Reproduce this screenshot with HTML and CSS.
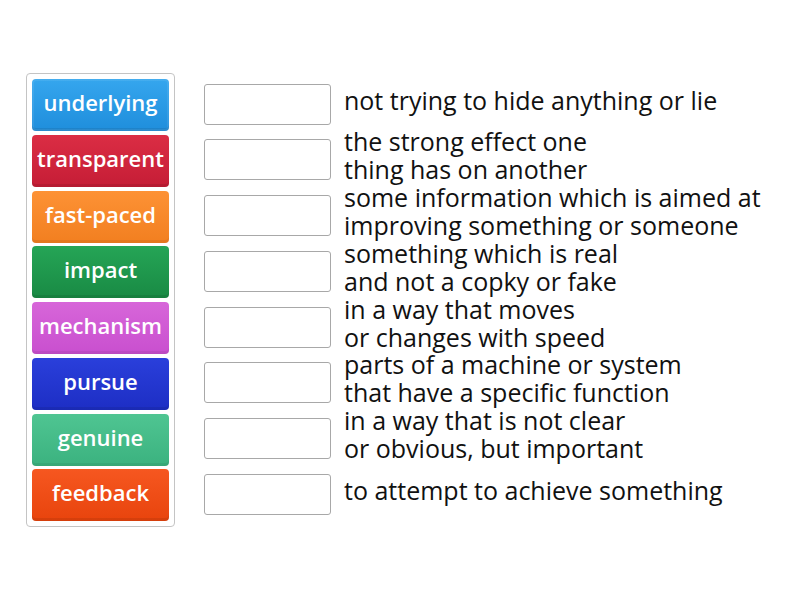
FILE: index.html
```html
<!DOCTYPE html>
<html>
<head>
<meta charset="utf-8">
<link rel="stylesheet" href="styles.css">
</head>
<body>
<div class="page">
  <div class="bank">
    <div class="tile c1">underlying</div>
    <div class="tile c2">transparent</div>
    <div class="tile c3">fast-paced</div>
    <div class="tile c4">impact</div>
    <div class="tile c5">mechanism</div>
    <div class="tile c6">pursue</div>
    <div class="tile c7">genuine</div>
    <div class="tile c8">feedback</div>
  </div>
  <div class="rows">
    <div class="row"><div class="slot"></div><div class="def">not trying to hide anything or lie</div></div>
    <div class="row"><div class="slot"></div><div class="def">the strong effect one<br>thing has on another</div></div>
    <div class="row"><div class="slot"></div><div class="def">some information which is aimed at<br>improving something or someone</div></div>
    <div class="row"><div class="slot"></div><div class="def">something which is real<br>and not a copky or fake</div></div>
    <div class="row"><div class="slot"></div><div class="def">in a way that moves<br>or changes with speed</div></div>
    <div class="row"><div class="slot"></div><div class="def">parts of a machine or system<br>that have a specific function</div></div>
    <div class="row"><div class="slot"></div><div class="def">in a way that is not clear<br>or obvious, but important</div></div>
    <div class="row"><div class="slot"></div><div class="def">to attempt to achieve something</div></div>
  </div>
</div>
</body>
</html>
```
FILE: styles.css
```css
html, body {
  margin: 0;
  padding: 0;
  background: #fff;
}
.page {
  display: flex;
  align-items: flex-start;
  padding: 73px 0 0 26px;
  font-family: "Open Sans", "Liberation Sans", sans-serif;
}
.bank {
  display: flex;
  flex-direction: column;
  gap: 3.75px;
  padding: 5px;
  border: 1px solid #c4c4c4;
  border-radius: 4px;
  width: 137px;
}
.tile {
  height: 52px;
  border-radius: 4px;
  color: #fff;
  font-size: 22px;
  font-weight: 600;
  display: flex;
  align-items: center;
  justify-content: center;
  box-sizing: border-box;
  padding-bottom: 6px;
  white-space: nowrap;
}
.c1 { background: linear-gradient(#35a6ee, #1f8edc); box-shadow: inset 0 -3px 0 rgba(0,0,0,0.08), inset 0 0 0 2px rgba(255,255,255,0.08); }
.c2 { background: linear-gradient(#db2d44, #c51d36); box-shadow: inset 0 -3px 0 rgba(0,0,0,0.08); }
.c3 { background: linear-gradient(#fd9235, #f27f20); box-shadow: inset 0 -3px 0 rgba(0,0,0,0.06); }
.c4 { background: linear-gradient(#25a556, #198a44); box-shadow: inset 0 -3px 0 rgba(0,0,0,0.08); }
.c5 { background: linear-gradient(#d766d9, #c94fcf); box-shadow: inset 0 -3px 0 rgba(0,0,0,0.06); }
.c6 { background: linear-gradient(#2a3fdb, #1d2ec4); box-shadow: inset 0 -3px 0 rgba(0,0,0,0.08); }
.c7 { background: linear-gradient(#4fc592, #3bb27f); box-shadow: inset 0 -3px 0 rgba(0,0,0,0.06); }
.c8 { background: linear-gradient(#f65720, #e8440d); box-shadow: inset 0 -3px 0 rgba(0,0,0,0.08); }
.rows {
  display: flex;
  flex-direction: column;
  gap: 3.75px;
  margin-left: 29px;
  padding-top: 5px;
}
.row {
  height: 52px;
  display: flex;
  align-items: center;
}
.slot {
  width: 127px;
  height: 41px;
  box-sizing: border-box;
  border: 1px solid #a8a8a8;
  border-radius: 3px;
  background: #fff;
  flex: none;
}
.def {
  margin-left: 13px;
  margin-bottom: 7px;
  font-size: 25px;
  line-height: 27.8px;
  color: #111;
  white-space: nowrap;
}
```
